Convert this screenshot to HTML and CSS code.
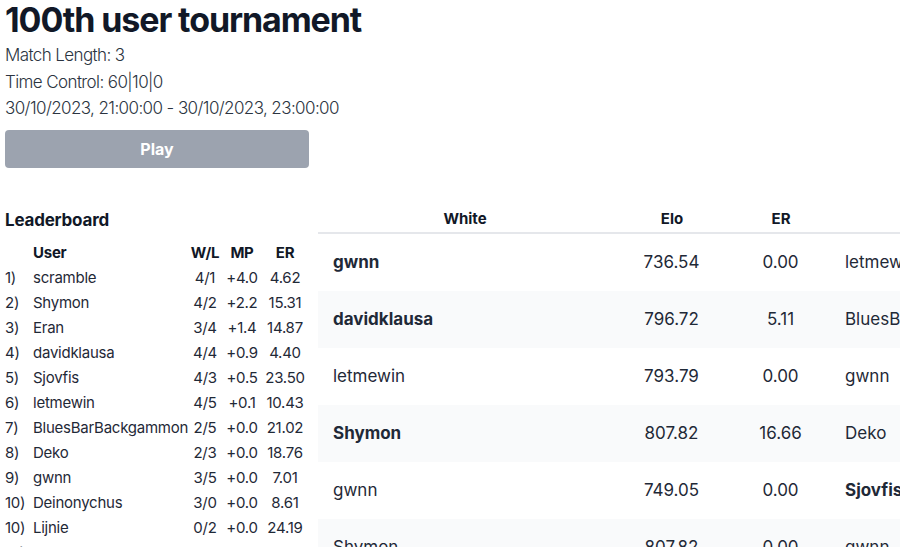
FILE: index.html
```html
<!DOCTYPE html>
<html lang="en">
<head>
<meta charset="utf-8">
<title>100th user tournament</title>
<link rel="stylesheet" href="styles.css">
</head>
<body>
<div class="page">
  <h1 class="title">100th user tournament</h1>
  <div class="info">Match Length: 3</div>
  <div class="info">Time Control: 60|10|0</div>
  <div class="info">30/10/2023, 21:00:00 - 30/10/2023, 23:00:00</div>
  <button class="play" type="button">Play</button>

  <div class="columns">
    <section class="leaderboard">
      <h2 class="lb-title">Leaderboard</h2>
      <table class="lb-table">
        <colgroup>
          <col class="l-rank"><col class="l-user"><col class="l-wl"><col class="l-mp"><col class="l-er">
        </colgroup>
        <thead>
          <tr><th class="rank"></th><th class="user">User</th><th>W/L</th><th>MP</th><th>ER</th></tr>
        </thead>
        <tbody>
          <tr><td class="rank">1)</td><td class="user">scramble</td><td>4/1</td><td>+4.0</td><td>4.62</td></tr>
          <tr><td class="rank">2)</td><td class="user">Shymon</td><td>4/2</td><td>+2.2</td><td>15.31</td></tr>
          <tr><td class="rank">3)</td><td class="user">Eran</td><td>3/4</td><td>+1.4</td><td>14.87</td></tr>
          <tr><td class="rank">4)</td><td class="user">davidklausa</td><td>4/4</td><td>+0.9</td><td>4.40</td></tr>
          <tr><td class="rank">5)</td><td class="user">Sjovfis</td><td>4/3</td><td>+0.5</td><td>23.50</td></tr>
          <tr><td class="rank">6)</td><td class="user">letmewin</td><td>4/5</td><td>+0.1</td><td>10.43</td></tr>
          <tr><td class="rank">7)</td><td class="user">BluesBarBackgammon</td><td>2/5</td><td>+0.0</td><td>21.02</td></tr>
          <tr><td class="rank">8)</td><td class="user">Deko</td><td>2/3</td><td>+0.0</td><td>18.76</td></tr>
          <tr><td class="rank">9)</td><td class="user">gwnn</td><td>3/5</td><td>+0.0</td><td>7.01</td></tr>
          <tr><td class="rank">10)</td><td class="user">Deinonychus</td><td>3/0</td><td>+0.0</td><td>8.61</td></tr>
          <tr><td class="rank">10)</td><td class="user">Lijnie</td><td>0/2</td><td>+0.0</td><td>24.19</td></tr>
          <tr><td class="rank">12)</td><td class="user">BB</td><td>0/1</td><td>-0.0</td><td>20.24</td></tr>
        </tbody>
      </table>
    </section>

    <section class="matches">
      <table class="m-table">
        <colgroup>
          <col class="c-name"><col class="c-elo"><col class="c-er">
          <col class="c-name"><col class="c-elo"><col class="c-er">
        </colgroup>
        <thead>
          <tr><th>White</th><th>Elo</th><th>ER</th><th>Black</th><th>Elo</th><th>ER</th></tr>
        </thead>
        <tbody>
          <tr><td class="name win">gwnn</td><td class="num">736.54</td><td class="num">0.00</td><td class="name">letmewin</td><td class="num">793.79</td><td class="num">9.21</td></tr>
          <tr><td class="name win">davidklausa</td><td class="num">796.72</td><td class="num">5.11</td><td class="name">BluesBarBackgammon</td><td class="num">801.40</td><td class="num">21.02</td></tr>
          <tr><td class="name">letmewin</td><td class="num">793.79</td><td class="num">0.00</td><td class="name">gwnn</td><td class="num">736.54</td><td class="num">7.01</td></tr>
          <tr><td class="name win">Shymon</td><td class="num">807.82</td><td class="num">16.66</td><td class="name">Deko</td><td class="num">790.12</td><td class="num">18.76</td></tr>
          <tr><td class="name">gwnn</td><td class="num">749.05</td><td class="num">0.00</td><td class="name win">Sjovfis</td><td class="num">812.30</td><td class="num">23.50</td></tr>
          <tr><td class="name">Shymon</td><td class="num">807.82</td><td class="num">0.00</td><td class="name">gwnn</td><td class="num">749.05</td><td class="num">7.01</td></tr>
        </tbody>
      </table>
    </section>
  </div>
</div>
</body>
</html>
```

FILE: styles.css
```css
html, body {
  margin: 0;
  padding: 0;
  background: #ffffff;
  overflow: hidden;
}

body {
  font-family: "Inter", "Liberation Sans", sans-serif;
  color: #1f2937;
}

.page {
  padding: 0 0 0 5px;
}

.title {
  margin: 0 0 2px;
  font-size: 34px;
  line-height: 40px;
  font-weight: 700;
  color: #111827;
  letter-spacing: -1.1px;
}

.info {
  font-size: 17px;
  line-height: 26.5px;
  font-weight: 300;
  color: #2b3441;
  letter-spacing: -0.6px;
}

.play {
  display: block;
  margin-top: 8px;
  width: 304px;
  height: 38px;
  border: none;
  border-radius: 4px;
  background: #9ca3af;
  color: #ffffff;
  font-family: inherit;
  font-size: 16px;
  font-weight: 700;
}

.columns {
  display: grid;
  grid-template-columns: 303px 1fr;
  gap: 10px;
  margin-top: 37px;
}

.lb-title {
  margin: 1px 0 5px;
  font-size: 17px;
  line-height: 29px;
  font-weight: 700;
  color: #111827;
  letter-spacing: -0.2px;
}

.lb-table {
  table-layout: fixed;
  width: 303px;
  border-collapse: collapse;
  font-size: 15px;
  letter-spacing: -0.25px;
}

.l-rank { width: 28px; }
.l-user { width: 155px; }
.l-wl { width: 34px; }
.l-mp { width: 40px; }
.l-er { width: 46px; }

.lb-table th,
.lb-table td {
  height: 25px;
  padding: 0;
  text-align: center;
  white-space: nowrap;
}

.lb-table th {
  font-weight: 700;
  color: #111827;
}

.lb-table .rank,
.lb-table .user {
  text-align: left;
}

.matches {
  overflow: hidden;
}

.m-table {
  table-layout: fixed;
  width: 1024px;
  border-collapse: collapse;
  font-size: 17px;
}

.c-name { width: 294px; }
.c-elo { width: 120px; }
.c-er { width: 98px; }

.m-table th {
  height: 27px;
  padding: 0 16px;
  font-size: 15px;
  font-weight: 700;
  text-align: center;
  color: #111827;
  border-bottom: 2px solid #e5e7eb;
}

.m-table td {
  height: 57px;
  padding: 0 16px 0 15px;
  white-space: nowrap;
  overflow: hidden;
}

.m-table tbody tr:nth-child(even) {
  background: #f9fafb;
}

.m-table .name {
  text-align: left;
}

.m-table .num {
  text-align: center;
}

.m-table .win {
  font-weight: 700;
}
```
